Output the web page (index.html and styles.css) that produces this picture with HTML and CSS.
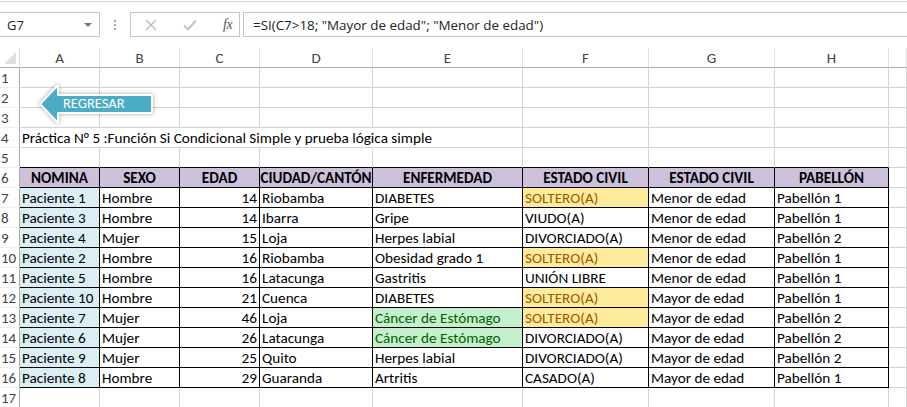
FILE: index.html
```html
<!DOCTYPE html>
<html lang="es">
<head>
<meta charset="utf-8">
<title>Práctica N° 5</title>
<link rel="stylesheet" href="styles.css">
</head>
<body>
<div class="app">
  <div class="topline"></div>
  <div class="fbar">
    <div class="namebox"><span class="nb-text">G7</span><span class="nb-arrow"></span></div>
    <div class="dots"><i></i><i></i><i></i></div>
    <div class="fbtns">
      <svg class="ic-x" width="12" height="12" viewBox="0 0 12 12"><path d="M1 1L11 11M11 1L1 11" stroke="#b9b9b9" stroke-width="1.4" fill="none"/></svg>
      <svg class="ic-ok" width="14" height="12" viewBox="0 0 14 12"><path d="M1 6.5L5 10.5L13 1.5" stroke="#c4c4c4" stroke-width="2" fill="none"/></svg>
      <span class="fx">fx</span>
    </div>
    <div class="finput">=SI(C7&gt;18; "Mayor de edad"; "Menor de edad")</div>
  </div>

  <div class="sheet">
    <div class="row hdr">
      <div class="corner"><span class="tri"></span></div>
      <div class="ch">A</div><div class="ch">B</div><div class="ch">C</div><div class="ch">D</div><div class="ch">E</div><div class="ch">F</div><div class="ch">G</div><div class="ch">H</div><div class="ch"></div>
    </div>

    <div class="row"><div class="rh">1</div><div class="c"></div><div class="c"></div><div class="c"></div><div class="c"></div><div class="c"></div><div class="c"></div><div class="c"></div><div class="c"></div><div class="c"></div></div>
    <div class="row"><div class="rh">2</div><div class="c"></div><div class="c"></div><div class="c"></div><div class="c"></div><div class="c"></div><div class="c"></div><div class="c"></div><div class="c"></div><div class="c"></div></div>
    <div class="row"><div class="rh">3</div><div class="c"></div><div class="c"></div><div class="c"></div><div class="c"></div><div class="c"></div><div class="c"></div><div class="c"></div><div class="c"></div><div class="c"></div></div>
    <div class="row"><div class="rh">4</div><div class="c span5">Práctica N° 5 :Función Si Condicional Simple y prueba lógica simple</div><div class="c"></div><div class="c"></div><div class="c"></div><div class="c"></div></div>
    <div class="row"><div class="rh">5</div><div class="c tt"></div><div class="c tt"></div><div class="c tt"></div><div class="c tt"></div><div class="c tt"></div><div class="c tt"></div><div class="c tt"></div><div class="c tt"></div><div class="c"></div></div>

    <div class="row"><div class="rh">6</div><div class="c t th">NOMINA</div><div class="c t th">SEXO</div><div class="c t th">EDAD</div><div class="c t th">CIUDAD/CANTÓN</div><div class="c t th">ENFERMEDAD</div><div class="c t th">ESTADO CIVIL</div><div class="c t th">ESTADO CIVIL</div><div class="c t th">PABELLÓN</div><div class="c"></div></div>

    <div class="row"><div class="rh">7</div><div class="c t nom">Paciente 1</div><div class="c t">Hombre</div><div class="c t num">14</div><div class="c t">Riobamba</div><div class="c t">DIABETES</div><div class="c t neutral">SOLTERO(A)</div><div class="c t">Menor de edad</div><div class="c t">Pabellón 1</div><div class="c"></div></div>
    <div class="row"><div class="rh">8</div><div class="c t nom">Paciente 3</div><div class="c t">Hombre</div><div class="c t num">14</div><div class="c t">Ibarra</div><div class="c t">Gripe</div><div class="c t">VIUDO(A)</div><div class="c t">Menor de edad</div><div class="c t">Pabellón 1</div><div class="c"></div></div>
    <div class="row"><div class="rh">9</div><div class="c t nom">Paciente 4</div><div class="c t">Mujer</div><div class="c t num">15</div><div class="c t">Loja</div><div class="c t">Herpes labial</div><div class="c t">DIVORCIADO(A)</div><div class="c t">Menor de edad</div><div class="c t">Pabellón 2</div><div class="c"></div></div>
    <div class="row"><div class="rh">10</div><div class="c t nom">Paciente 2</div><div class="c t">Hombre</div><div class="c t num">16</div><div class="c t">Riobamba</div><div class="c t">Obesidad grado 1</div><div class="c t neutral">SOLTERO(A)</div><div class="c t">Menor de edad</div><div class="c t">Pabellón 1</div><div class="c"></div></div>
    <div class="row"><div class="rh">11</div><div class="c t nom">Paciente 5</div><div class="c t">Hombre</div><div class="c t num">16</div><div class="c t">Latacunga</div><div class="c t">Gastritis</div><div class="c t">UNIÓN LIBRE</div><div class="c t">Menor de edad</div><div class="c t">Pabellón 1</div><div class="c"></div></div>
    <div class="row"><div class="rh">12</div><div class="c t nom">Paciente 10</div><div class="c t">Hombre</div><div class="c t num">21</div><div class="c t">Cuenca</div><div class="c t">DIABETES</div><div class="c t neutral">SOLTERO(A)</div><div class="c t">Mayor de edad</div><div class="c t">Pabellón 1</div><div class="c"></div></div>
    <div class="row"><div class="rh">13</div><div class="c t nom">Paciente 7</div><div class="c t">Mujer</div><div class="c t num">46</div><div class="c t">Loja</div><div class="c t good">Cáncer de Estómago</div><div class="c t neutral">SOLTERO(A)</div><div class="c t">Mayor de edad</div><div class="c t">Pabellón 2</div><div class="c"></div></div>
    <div class="row"><div class="rh">14</div><div class="c t nom">Paciente 6</div><div class="c t">Mujer</div><div class="c t num">26</div><div class="c t">Latacunga</div><div class="c t good">Cáncer de Estómago</div><div class="c t">DIVORCIADO(A)</div><div class="c t">Mayor de edad</div><div class="c t">Pabellón 2</div><div class="c"></div></div>
    <div class="row"><div class="rh">15</div><div class="c t nom">Paciente 9</div><div class="c t">Mujer</div><div class="c t num">25</div><div class="c t">Quito</div><div class="c t">Herpes labial</div><div class="c t">DIVORCIADO(A)</div><div class="c t">Mayor de edad</div><div class="c t">Pabellón 2</div><div class="c"></div></div>
    <div class="row"><div class="rh">16</div><div class="c t nom">Paciente 8</div><div class="c t">Hombre</div><div class="c t num">29</div><div class="c t">Guaranda</div><div class="c t">Artritis</div><div class="c t">CASADO(A)</div><div class="c t">Mayor de edad</div><div class="c t">Pabellón 1</div><div class="c"></div></div>
    <div class="row"><div class="rh">17</div><div class="c"></div><div class="c"></div><div class="c"></div><div class="c"></div><div class="c"></div><div class="c"></div><div class="c"></div><div class="c"></div><div class="c"></div></div>

    <div class="btn-arrow">
      <svg width="130" height="52" viewBox="34 78 130 52">
        <polygon points="40,104 58,85 58,95 152,95 152,113 58,113 58,123" fill="#4bacc6" stroke="#ffffff" stroke-width="2" stroke-linejoin="round"/>
      </svg>
      <span class="btn-label">REGRESAR</span>
    </div>
  </div>
</div>
</body>
</html>
```

FILE: styles.css
```css
html, body {
  margin: 0;
  padding: 0;
  background: #ffffff;
  overflow: hidden;
}

.app {
  width: 907px;
  height: 407px;
  overflow: hidden;
  font-family: Carlito, Calibri, Lato, "Liberation Sans", sans-serif;
  color: #000;
}

.topline {
  height: 1px;
  margin-top: 1px;
  background: #d6d6d6;
}

.fbar {
  display: flex;
  align-items: stretch;
  height: 25px;
  margin-top: 10px;
  margin-bottom: 11px;
}

.namebox {
  box-sizing: border-box;
  width: 101px;
  margin-left: -1px;
  border: 1px solid #c6c6c6;
  display: flex;
  align-items: center;
  justify-content: space-between;
  padding: 0 6px 0 7px;
  font-family: "Open Sans", "Noto Sans", sans-serif;
  font-size: 13px;
  color: #222;
}

.nb-arrow {
  width: 0;
  height: 0;
  border-left: 4px solid transparent;
  border-right: 4px solid transparent;
  border-top: 4px solid #777;
  margin-right: 1px;
}

.dots {
  width: 30px;
  display: flex;
  flex-direction: column;
  align-items: center;
  justify-content: center;
  gap: 2px;
}

.dots i {
  display: block;
  width: 2px;
  height: 2px;
  background: #a8a8a8;
}

.fbtns {
  box-sizing: border-box;
  width: 110px;
  border: 1px solid #c6c6c6;
  display: flex;
  align-items: center;
  padding-left: 14px;
}

.ic-x { margin-right: 26px; }
.ic-ok { margin-right: 26px; }

.fx {
  font-family: "Liberation Serif", serif;
  font-style: italic;
  font-size: 14px;
  color: #555;
  letter-spacing: -0.5px;
}

.finput {
  box-sizing: border-box;
  flex: 1;
  margin-left: 3px;
  margin-right: -2px;
  border: 1px solid #c6c6c6;
  padding: 0 0 0 9px;
  display: flex;
  align-items: center;
  font-family: "Open Sans", "Noto Sans", sans-serif;
  font-size: 13.4px;
  color: #222;
  white-space: nowrap;
}

.sheet {
  position: relative;
}

.row {
  display: grid;
  grid-template-columns: 20px 80px 80px 80px 113px 150px 126px 126px 114px 1fr;
  height: 20px;
}

.row > div {
  box-sizing: border-box;
  height: 20px;
  white-space: nowrap;
}

.hdr .corner {
  position: relative;
  border-right: 1px solid #dcdcdc;
  border-bottom: 1px solid #ababab;
}

.tri {
  position: absolute;
  right: 3px;
  bottom: 3px;
  width: 0;
  height: 0;
  border-left: 12px solid transparent;
  border-bottom: 12px solid #dfdfdf;
}

.ch {
  border-right: 1px solid #e1e1e1;
  border-bottom: 1px solid #ababab;
  text-align: center;
  font-size: 15px;
  line-height: 20px;
  color: #444;
}

.rh {
  border-right: 1px solid #ababab;
  border-bottom: 1px solid #f0f0f0;
  font-size: 15px;
  line-height: 20px;
  color: #444;
  padding-left: 1px;
}

.c {
  border-right: 1px solid #d4d4d4;
  border-bottom: 1px solid #d4d4d4;
  font-size: 15.2px;
  line-height: 21px;
  padding: 0 2px;
  overflow: visible;
}

.span5 {
  grid-column: span 5;
  border-right: 1px solid #d4d4d4;
}

.tt {
  border-bottom-color: #000;
}

.t {
  border-right-color: #000;
  border-bottom-color: #000;
  overflow: hidden;
}

.th {
  background: #ccc0da;
  font-weight: bold;
  text-align: center;
  padding: 0;
}

.nom {
  background: #daeef3;
}

.num {
  text-align: right;
}

.neutral {
  background: #ffeb9c;
  color: #9c5700;
}

.good {
  background: #c6efce;
  color: #006100;
}

.btn-arrow {
  position: absolute;
  left: 34px;
  top: 30px;
  width: 130px;
  height: 52px;
}

.btn-arrow svg {
  display: block;
  filter: drop-shadow(0 0 2px rgba(0, 0, 0, 0.35));
}

.btn-label {
  position: absolute;
  left: 29px;
  top: 16px;
  font-size: 14.5px;
  line-height: 18px;
  color: #ffffff;
}
```
